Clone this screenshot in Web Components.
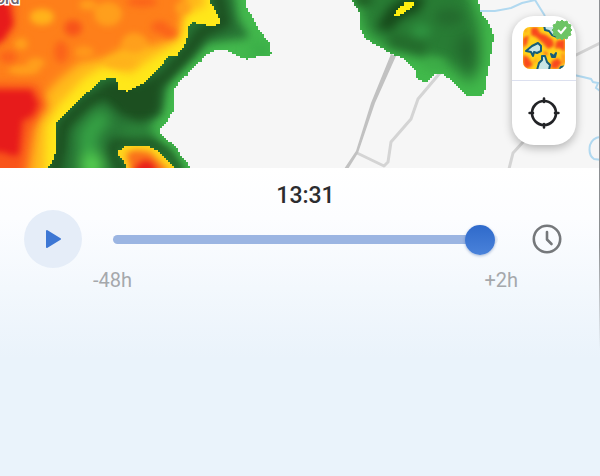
<!DOCTYPE html>
<html lang="en">
<head>
<meta charset="utf-8">
<meta name="viewport" content="width=device-width, initial-scale=1">
<title>Rain radar</title>
<style>
  html, body {
    height: 100%;
    margin: 0;
  }

  body {
    background: #eaf3fb;
    font-family: Roboto, "Liberation Sans", sans-serif;
    color: #2b2c2e;
  }
</style>
</head>
<body>
<radar-app>
  <radar-map slot="map"></radar-map>
  <map-controls slot="controls"></map-controls>
  <time-panel time="13:31" from="-48h" to="+2h" min="-2880" max="120" value="95"></time-panel>
</radar-app>

<script>
// small helper, every element gets an open shadow root with its own template
function attachTemplate(element, html) {
  const template = document.createElement('template');
  template.innerHTML = html;
  element.attachShadow({ mode: 'open' });
  element.shadowRoot.appendChild(template.content.cloneNode(true));
}

// page frame: the map with its floating controls, the time panel below
class RadarApp extends HTMLElement {
  constructor() {
    super();
    attachTemplate(this, `
      <style>
        :host {
          display: flex;
          flex-direction: column;
          min-height: 100%;
          position: relative;
          overflow: hidden;
        }

        /* thin shade on the right side of the screen */
        :host::after {
          content: "";
          position: absolute;
          top: 0;
          right: 0;
          width: 1px;
          height: 350px;
          background: linear-gradient(#8c8f92 70%, transparent);
        }

        .map {
          position: relative;
        }

        .controls {
          position: absolute;
          top: 16px;
          right: 24px;
        }
      </style>
      <div class="map">
        <slot name="map"></slot>
        <div class="controls"><slot name="controls"></slot></div>
      </div>
      <slot></slot>
    `);
  }
}

// outlines of the rain areas, in map units
const AREAS = {
  rain: '-4,-4 245,-4 245,0 247,9 252,16 259,30 270,44 271,53 269,56 255,57 247,59 240,57 227,50 217,50 208,54 180,82 174,90 173,112 167,121 160,129 161,135 172,144 178,150 181,157 191,168 191,172 -4,172',
  storm: '-4,-4 208,-4 208,0 213,6 219,18 219,24 213,26 207,25 193,22 189,25 188,35 186,43 177,55 167,57 163,63 148,80 135,88 127,91 119,90 116,79 109,78 100,81 73,106 57,122 55,130 55,153 52,163 47,168 47,172 -4,172',
  cell: '127,172 127,168 123,160 117,152 124,146 150,147 158,151 166,159 174,168 174,172',
  east: '352,-4 352,0 355,6 360,14 360,30 365,38 372,43 392,54 400,57 410,65 416,71 417,78 424,83 430,79 435,74 440,73 449,79 460,90 467,96 480,96 485,90 486,79 490,60 493,42 493,33 489,23 482,14 479,4 476,-4',
  spot: '394,14 397,9 404,5 405,2 412,1 414,5 409,9 403,14 397,16',
};

// radar data is a coarse raster, so the outlines walk along a grid
function toSteps(points, cell) {
  const list = points.split(' ').map((p) => p.split(',').map(Number));
  let d = '';
  list.forEach(([x1, y1], i) => {
    const [x2, y2] = list[(i + 1) % list.length];
    const count = Math.ceil(Math.hypot(x2 - x1, y2 - y1));
    for (let n = 0; n < count; n++) {
      const x = Math.round((x1 + ((x2 - x1) * n) / count) / cell) * cell;
      const y = Math.round((y1 + ((y2 - y1) * n) / count) / cell) * cell;
      d += d ? `H${x}V${y}` : `M${x} ${y}`;
    }
  });
  return d + 'Z';
}

class RadarMap extends HTMLElement {
  constructor() {
    super();
    const clips = Object.keys(AREAS)
      .map((name) => `<clipPath id="${name}"><path d="${toSteps(AREAS[name], 2)}"/></clipPath>`)
      .join('');

    attachTemplate(this, `
      <style>
        :host {
          display: block;
          background: #f6f6f6;
        }

        svg {
          display: block;
          width: 100%;
        }

        filter {
          color-interpolation-filters: sRGB;
        }

        text {
          font: 500 16px Roboto, sans-serif;
          fill: #6b6670;
          stroke: white;
          stroke-width: 3px;
          paint-order: stroke;
        }
      </style>
      <svg viewBox="0 0 600 168" role="img" aria-label="Rain radar map">
        <defs>
          ${clips}
          <filter id="b3" x="-50%" y="-50%" width="200%" height="200%"><feGaussianBlur stdDeviation="3"/></filter>
          <filter id="b5" x="-50%" y="-50%" width="200%" height="200%"><feGaussianBlur stdDeviation="5"/></filter>
          <filter id="b7" x="-50%" y="-50%" width="200%" height="200%"><feGaussianBlur stdDeviation="7"/></filter>
        </defs>

        <!-- rivers -->
        <g fill="none" stroke="#b1d9f0" stroke-width="2">
          <path d="M480 11L495 11L511 8L522 3L535 0L545 16"/>
          <path d="M574 75L583 77L591 79L593 82L598 83L596 88L600 91"/>
          <path d="M602 137Q593 137 590 145Q588 155 594 159L602 160"/>
        </g>

        <!-- roads -->
        <g fill="none" stroke="#d4d4d4" stroke-width="3" stroke-linejoin="round">
          <path d="M440 73L418 99L411 119L391 142L388 162L384 166L357 153"/>
          <path d="M509 169L513 153L524 141M574 56L600 43"/>
        </g>
        <path d="M391 54L396 56L375 103L358 153L348 169L344 169L356 151L371 103Z" fill="#c1c1c1"/>

        <!-- light rain, dark where it meets the storm -->
        <g clip-path="url(#rain)">
          <rect width="300" height="172" fill="#43b94d"/>
          <g filter="url(#b5)">
            <path d="M210 -10L234 -10L238 18L250 38L232 40L208 43L190 60L168 80L162 112L150 124L152 137L166 155L180 178L40 178L40 110L80 80L110 70L180 20Z" fill="#277334"/>
          </g>
          <g filter="url(#b5)" fill="none" stroke="#1c4f20">
            <path d="M217 -8L224 22L202 32L188 52L164 78L140 90L112 87L86 104L63 126L60 150L54 175" stroke-width="12"/>
            <path d="M104 86L150 88L172 66L160 86L158 112L140 122L120 112L108 102Z" fill="#1c4f20" stroke-width="3"/>
            <path d="M112 143L150 141L168 153L182 174M112 143L112 156L124 174" stroke-width="8"/>
          </g>
          <g filter="url(#b7)">
            <path d="M106 114L88 134L90 175" fill="none" stroke="#37a546" stroke-width="18"/>
            <ellipse cx="92" cy="166" rx="12" ry="13" fill="#56d150"/>
            <ellipse cx="140" cy="131" rx="24" ry="4" fill="#32953f"/>
            <ellipse cx="260" cy="50" rx="10" ry="8" fill="#37a945"/>
          </g>
        </g>

        <!-- storm -->
        <g clip-path="url(#storm)">
          <rect x="-4" y="-4" width="230" height="180" fill="#ffe71a"/>
          <g filter="url(#b5)">
            <path d="M-20 -20L200 -20L206 6L184 15L178 42L152 58L130 74L104 66L84 78L58 106L46 125L44 180L-20 180Z" fill="#ffb81b"/>
            <path d="M-20 -20L186 -20L180 36L152 46L134 40L106 58L80 62L58 80L40 100L28 180L-20 180Z" fill="#fe7f1a"/>
          </g>
          <g filter="url(#b3)" fill="#ff9f1c">
            <ellipse cx="42" cy="17" rx="12" ry="8" fill="#ffb31b"/>
            <ellipse cx="108" cy="14" rx="14" ry="12"/>
            <ellipse cx="84" cy="52" rx="10" ry="6" fill="#ff981b"/>
            <ellipse cx="134" cy="43" rx="12" ry="10"/>
            <ellipse cx="21" cy="44" rx="7" ry="6"/>
            <ellipse cx="24" cy="70" rx="16" ry="5"/>
            <ellipse cx="36" cy="63" rx="9" ry="5"/>
            <ellipse cx="120" cy="62" rx="16" ry="6" fill="#ffb21b"/>
            <ellipse cx="88" cy="5" rx="9" ry="5"/>
            <ellipse cx="183" cy="8" rx="8" ry="6"/>
          </g>
          <g filter="url(#b3)" fill="#fb641a">
            <ellipse cx="73" cy="28" rx="9" ry="8" fill="#f7541a"/>
            <ellipse cx="61" cy="52" rx="7" ry="11"/>
            <ellipse cx="160" cy="27" rx="9" ry="6"/>
            <ellipse cx="169" cy="33" rx="8" ry="5"/>
            <ellipse cx="142" cy="2" rx="15" ry="5"/>
            <ellipse cx="8" cy="57" rx="9" ry="6"/>
          </g>
          <g filter="url(#b5)" fill="#f9541a">
            <path d="M-10 -10L15 0L14 28L-10 54ZM-10 84L36 85L48 106L30 128L26 152L22 180L-10 180Z"/>
          </g>
          <g filter="url(#b3)" fill="#e71b1b">
            <path d="M-10 -10L9 4L13 24L3 40L-10 46ZM-10 90L31 90L38 104L33 115L22 121L19 154L14 156L2 152L-10 152Z"/>
          </g>
        </g>

        <g clip-path="url(#cell)">
          <rect x="110" y="140" width="70" height="32" fill="#ffd51c"/>
          <g filter="url(#b3)">
            <path d="M126 153L136 150L150 152L170 172L132 176Z" fill="#fa701b"/>
            <path d="M136 166L144 160L152 162L160 176L132 176Z" fill="#e8201a"/>
          </g>
        </g>

        <!-- shower in the east -->
        <g clip-path="url(#east)">
          <rect x="350" y="-4" width="150" height="104" fill="#41b94b"/>
          <g filter="url(#b7)">
            <path d="M352 -20L464 -20L480 26L480 66L470 84L448 64L420 56L388 48L366 32Z" fill="#287c34"/>
            <path d="M460 33L480 42L474 76L456 54Z" fill="#22672c"/>
          </g>
          <g filter="url(#b5)">
            <path d="M376 28L388 8L404 -4L426 -4L420 11L402 19L390 31Z" fill="#174b1b"/>
            <ellipse cx="363" cy="0" rx="10" ry="5" fill="#1c5520"/>
            <path d="M390 39L426 49" stroke="#236a2b" stroke-width="13"/>
            <ellipse cx="449" cy="17" rx="14" ry="9" fill="#246c2e"/>
            <ellipse cx="421" cy="31" rx="10" ry="7" fill="#2f9340"/>
            <ellipse cx="434" cy="64" rx="12" ry="6" fill="#3dad47"/>
          </g>
        </g>
        <g clip-path="url(#spot)"><rect x="390" width="30" height="20" fill="#fff00f"/></g>

        <text x="-4" y="4">ord</text>
      </svg>
    `);
  }
}

// floating card with the layer button and the locate button
class MapControls extends HTMLElement {
  constructor() {
    super();
    attachTemplate(this, `
      <style>
        :host {
          display: flex;
          flex-direction: column;
          width: 64px;
          border-radius: 22px;
          background: white;
          box-shadow: 0 3px 10px rgba(0, 0, 0, 0.28);
        }

        button {
          display: grid;
          place-items: center;
          position: relative;
          height: 64px;
          padding: 0;
          border: 0;
          background: none;
          cursor: pointer;
        }

        button + button {
          height: 65px;
          border-top: 1px solid #dce0ef;
        }

        .badge {
          position: absolute;
          top: 3px;
          right: 3px;
        }
      </style>
      <button type="button" aria-label="Map layers">
        <svg width="42" height="42" viewBox="0 0 42 42">
          <defs>
            <clipPath id="tile"><rect width="42" height="42" rx="7"/></clipPath>
            <filter id="soft" x="-50%" y="-50%" width="200%" height="200%"><feGaussianBlur stdDeviation="1.5"/></filter>
          </defs>
          <g clip-path="url(#tile)">
            <rect width="42" height="42" fill="#ffd21a"/>
            <g filter="url(#soft)" fill="#f9491b">
              <path d="M8 1L14 0L17 6L23 8L30 13L31 19L25 22L20 16L13 10L8 8ZM0 11L6 8L4 17L0 21ZM0 28L5 30L10 38L4 42L0 39ZM33 14L42 12L42 25L36 21L32 22ZM29 34L35 31L39 36L34 42L27 41ZM20 24L25 26L23 29Z"/>
              <path d="M1 3L5 1L3 7ZM38 26L42 27L42 39L39 35ZM15 31L12 36L9 35Z" fill="#ff8c1a"/>
            </g>
            <g fill="#c9e5e4" stroke="#155d79" stroke-width="2" stroke-linejoin="round">
              <path d="M3 24L9 19L15 16L18 19L18 24L14 26L11 25L10 29L8 25Z"/>
              <path d="M14 43L16 36L19 33L19 29L22 29L24 35L27 38L26 43Z"/>
              <path d="M21 -2L22 3L26 4L29 8L34 10L44 8L44 -2Z"/>
              <path d="M28 27L31 29L33 26L32 30L29 30ZM36 43L38 40L43 39L43 43Z" fill="#155d79"/>
            </g>
          </g>
        </svg>
        <svg class="badge" width="22" height="22" viewBox="0 0 22 22">
          <path d="M11 1L13 3L16 2L17 5L20 6L19 9L21 11L19 13L20 16L17 17L16 20L13 19L11 21L9 19L6 20L5 17L2 16L3 13L1 11L3 9L2 6L5 5L6 2L9 3Z" fill="#6dc465" stroke="#6dc465" stroke-linejoin="round"/>
          <path d="M7 11L10 14L15 8" fill="none" stroke="white" stroke-width="2"/>
        </svg>
      </button>
      <button type="button" aria-label="My location">
        <svg width="34" height="34" viewBox="0 0 34 34" fill="none" stroke="#222326" stroke-width="2.6" stroke-linecap="round">
          <circle cx="17" cy="17" r="12"/>
          <path d="M17 2.6V6M17 28V31.4M2.6 17H6M28 17H31.4"/>
        </svg>
      </button>
    `);
  }
}

// time readout, play button, slider and clock button
class TimePanel extends HTMLElement {
  constructor() {
    super();
    attachTemplate(this, `
      <style>
        :host {
          display: grid;
          grid-template-columns: 58px 1fr 58px;
          grid-template-rows: 28px 58px 24px;
          flex: 1;
          align-content: start;
          align-items: center;
          padding: 14px 24px;
          background: linear-gradient(white, #fcfdff 50px, #eaf3fb 190px);
        }

        output, .track, .range {
          grid-column: 2;
          margin-left: 11px;
        }

        output {
          text-align: center;
          font-size: 23px;
          font-weight: 500;
          line-height: 30px;
        }

        button {
          display: grid;
          place-items: center;
          width: 58px;
          height: 58px;
          padding: 0;
          border: 0;
          border-radius: 50%;
          background: none;
          cursor: pointer;
        }

        .play {
          grid-column: 1;
          background: #e5edf8;
        }

        .track {
          display: flex;
          padding: 0 20px;
        }

        input {
          appearance: none;
          flex: 1;
          min-width: 0;
          height: 30px;
          margin: 0;
          background: none;
          cursor: pointer;
        }

        input::-webkit-slider-runnable-track {
          height: 9px;
          border-radius: 5px;
          background: linear-gradient(to right, #9bb5e2 var(--played), #e9eff8 var(--played));
        }

        input::-webkit-slider-thumb {
          appearance: none;
          width: 30px;
          height: 30px;
          margin-top: -10px;
          border-radius: 50%;
          background: linear-gradient(#2f6acb, #4a82da);
          box-shadow: 0 1px 3px rgba(40, 80, 150, 0.4);
        }

        .range {
          display: flex;
          justify-content: space-between;
          font-size: 20px;
          line-height: 24px;
          color: #a5a8ac;
        }
      </style>
      <output for="time"></output>
      <button class="play" type="button" aria-label="Play">
        <svg width="18" height="20" viewBox="0 0 18 20">
          <path d="M3 2L16 10L3 18Z" fill="#3d77d4" stroke="#3d77d4" stroke-width="2" stroke-linejoin="round"/>
        </svg>
      </button>
      <div class="track"><input id="time" type="range" aria-label="Radar time"></div>
      <button type="button" aria-label="Go to current time">
        <svg width="30" height="30" viewBox="0 0 30 30" fill="none" stroke="#75787b" stroke-width="2.6" stroke-linecap="round" stroke-linejoin="round">
          <circle cx="15" cy="15" r="13.2"/>
          <path d="M15 8V15.5L19.5 20"/>
        </svg>
      </button>
      <div class="range"><span class="from"></span><span class="to"></span></div>
    `);
  }

  connectedCallback() {
    const root = this.shadowRoot;
    const input = root.querySelector('input');
    root.querySelector('output').textContent = this.getAttribute('time');
    root.querySelector('.from').textContent = this.getAttribute('from');
    root.querySelector('.to').textContent = this.getAttribute('to');

    // min and max go first, otherwise the value is clamped to 0-100
    input.min = this.getAttribute('min');
    input.max = this.getAttribute('max');
    input.value = this.getAttribute('value');
    input.addEventListener('input', () => this.paintTrack());
    this.paintTrack();
  }

  // fill the part of the track that lies left of the thumb
  paintTrack() {
    const input = this.shadowRoot.querySelector('input');
    const part = (input.value - input.min) / (input.max - input.min);
    input.style.setProperty('--played', `calc(15px + (100% - 30px) * ${part})`);
  }
}

customElements.define('radar-app', RadarApp);
customElements.define('radar-map', RadarMap);
customElements.define('map-controls', MapControls);
customElements.define('time-panel', TimePanel);
</script>
</body>
</html>
